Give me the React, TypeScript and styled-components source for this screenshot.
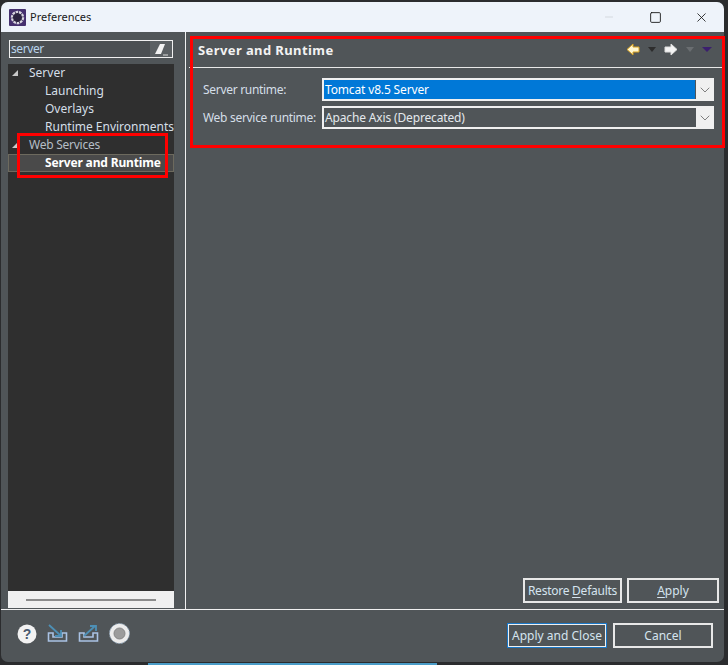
import React from "react";
import styled, { createGlobalStyle } from "styled-components";
import { Minus, Square, X, ChevronDown } from "lucide-react";

const GlobalStyle = createGlobalStyle`
  html, body {
    margin: 0;
    padding: 0;
    background: #2b2c2e;
    overflow: hidden;
  }
  * {
    box-sizing: border-box;
  }
`;

const Desktop = styled.div`
  position: relative;
  width: 728px;
  height: 665px;
  padding: 2px 4px 3px 1px;
  font-family: "Noto Sans", "Liberation Sans", sans-serif;
  font-size: 12px;
  color: #e6ebef;
  overflow: hidden;
`;

const BackdropLine = styled.div`
  position: absolute;
  left: 148px;
  top: 663px;
  width: 289px;
  height: 2px;
  background: #4a9cc7;
`;

const Window = styled.div`
  position: relative;
  height: 660px;
  display: flex;
  flex-direction: column;
  background: #505558;
  border-radius: 7px;
`;

const TitleBar = styled.div`
  height: 30px;
  flex: none;
  display: flex;
  align-items: center;
  background: #eef3fa;
  border-radius: 7px 7px 0 0;
  color: #1a1a1a;
  padding-left: 8px;
`;

const AppIcon = styled.svg`
  width: 17px;
  height: 17px;
  margin-right: 4px;
`;

const TitleText = styled.span`
  flex: 1;
  font-size: 11px;
  padding-bottom: 2px;
`;

const WinButton = styled.div<{ $dim?: boolean }>`
  width: 46px;
  height: 30px;
  display: flex;
  align-items: center;
  justify-content: center;
  color: ${(p) => (p.$dim ? "#b9bdc2" : "#111")};
`;

const Body = styled.div`
  flex: 1;
  min-height: 0;
  display: flex;
  border-bottom: 1px solid #f0f0f0;
`;

const Sidebar = styled.div`
  width: 185px;
  flex: none;
  display: flex;
  flex-direction: column;
  padding: 8px 11px 1px 7px;
  border-right: 1px solid #f0f0f0;
`;

const Search = styled.div`
  height: 18px;
  flex: none;
  display: flex;
  align-items: center;
  justify-content: space-between;
  margin: 0 1px;
  padding: 0 0 1px 1px;
  background: #4b4f52;
  border: 1px solid #f0f0f0;
  color: #b9d4ec;
  letter-spacing: -0.4px;
`;

const ClearBox = styled.div`
  width: 22px;
  height: 16px;
  margin-bottom: -1px;
  display: flex;
  align-items: center;
  justify-content: center;
  background: #5b6063;
`;

const Tree = styled.div`
  flex: 1;
  margin-top: 6px;
  background: #2f2f2f;
`;

const TreeRow = styled.div<{ $level: number; $selected?: boolean; $muted?: boolean }>`
  height: 18px;
  display: flex;
  align-items: center;
  white-space: nowrap;
  padding-left: ${(p) => (p.$level === 0 ? 4 : 37)}px;
  padding-bottom: 2px;
  font-weight: ${(p) => (p.$selected ? 700 : 400)};
  letter-spacing: ${(p) => (p.$selected ? "-0.15px" : p.$muted ? "-0.25px" : "0")};
  color: ${(p) => (p.$selected ? "#ffffff" : p.$muted ? "#b5bec6" : "#d5dfe8")};
  background: ${(p) => (p.$selected ? "#4a4a4a" : "transparent")};
  box-shadow: ${(p) => (p.$selected ? "inset 0 0 0 1px #6d6a5e" : "none")};
`;

const Twisty = styled.span`
  width: 0;
  height: 0;
  margin-right: 11px;
  margin-top: 1px;
  border-style: solid;
  border-width: 0 0 6px 6px;
  border-color: transparent transparent #c8c8c8 transparent;
`;

const ScrollFooter = styled.div`
  height: 17px;
  flex: none;
  display: flex;
  align-items: center;
  justify-content: center;
  background: #f0f0f0;
`;

const ScrollThumb = styled.div`
  width: 130px;
  height: 2px;
  background: #8b8b8b;
`;

const Content = styled.div`
  flex: 1;
  min-width: 0;
  display: flex;
  flex-direction: column;
  padding-left: 3px;
`;

const PageHeader = styled.div`
  height: 36px;
  flex: none;
  display: flex;
  align-items: center;
  justify-content: space-between;
  padding: 0 12px 0 9px;
  border-bottom: 1px solid #e8e8e8;
`;

const PageTitle = styled.h1`
  margin: 0;
  font-size: 13px;
  font-weight: 700;
  letter-spacing: 0.4px;
  color: #f2f2f2;
`;

const NavIcons = styled.div`
  display: flex;
  align-items: center;
  gap: 8px;
`;

const Form = styled.div`
  padding: 10px 10px 0 14px;
  display: grid;
  grid-template-columns: 119px 1fr;
  row-gap: 5px;
  align-items: center;
`;

const FieldLabel = styled.label`
  color: #d5dfe8;
  white-space: nowrap;
  letter-spacing: -0.3px;
`;

const Select = styled.div`
  height: 23px;
  display: flex;
  background: #f0f0f0;
  padding: 2px 0 2px 2px;
`;

const SelectValue = styled.div<{ $active?: boolean }>`
  flex: 1;
  display: flex;
  align-items: center;
  padding-left: 1px;
  letter-spacing: -0.15px;
  color: ${(p) => (p.$active ? "#ffffff" : "#e3e8ec")};
  background: ${(p) => (p.$active ? "#0078d7" : "#505558")};
  border-right: ${(p) => (p.$active ? "1px solid #505558" : "none")};
`;

const SelectArrow = styled.div`
  width: 18px;
  display: flex;
  align-items: center;
  justify-content: center;
  color: #555;
`;

const Spacer = styled.div`
  flex: 1;
`;

const PageActions = styled.div`
  display: flex;
  justify-content: flex-end;
  gap: 5px;
  padding: 0 5px 6px 0;
`;

const Button = styled.button<{ $width: number; $focused?: boolean }>`
  width: ${(p) => p.$width}px;
  height: 25px;
  padding: 0;
  font: inherit;
  letter-spacing: ${(p) => (p.$width === 99 ? "-0.25px" : "0")};
  color: #d5e4ef;
  background: #505558;
  border: 2px solid ${(p) => (p.$focused ? "#f0f0f0" : "#e8e8e8")};
  outline: ${(p) => (p.$focused ? "1px solid #1a78c8" : "none")};
  outline-offset: -1px;
  u {
    text-underline-offset: 2px;
  }
`;

const Footer = styled.div`
  height: 52px;
  flex: none;
  display: flex;
  align-items: flex-start;
  justify-content: space-between;
  border-radius: 0 0 7px 7px;
  padding: 13px 11px 0 16px;
`;

const FooterIcons = styled.div`
  display: flex;
  align-items: center;
  gap: 10px;
`;

const FooterButtons = styled.div`
  display: flex;
  gap: 6px;
`;

const Highlight = styled.div<{ $x: number; $y: number; $w: number; $h: number }>`
  position: absolute;
  left: ${(p) => p.$x}px;
  top: ${(p) => p.$y}px;
  width: ${(p) => p.$w}px;
  height: ${(p) => p.$h}px;
  border: 3px solid #ff0000;
  pointer-events: none;
`;

function NavArrow({ dir, color, edge }: { dir: "left" | "right"; color: string; edge: string }) {
  const d =
    dir === "left"
      ? "M1 6.5 L7 1 V4 H13 V9 H7 V12 Z"
      : "M13 6.5 L7 1 V4 H1 V9 H7 V12 Z";
  return (
    <svg width="14" height="13" viewBox="0 0 14 13">
      <path d={d} fill={color} stroke={edge} strokeWidth="1" />
    </svg>
  );
}

function Caret({ color, wide }: { color: string; wide?: boolean }) {
  return (
    <svg width={wide ? 10 : 8} height="5" viewBox="0 0 8 5" preserveAspectRatio="none">
      <path d="M0 0 H8 L4 5 Z" fill={color} />
    </svg>
  );
}

function ImportIcon({ out }: { out?: boolean }) {
  return (
    <svg width="21" height="19" viewBox="0 0 21 19" fill="none">
      <path d="M1.5 9 V17 H19.5 V9 H15 V13 H6 V9 Z" fill="#505558" stroke="#a9c2e4" strokeWidth="1.6" />
      <path
        d={out ? "M6 12 L17 2 M12 2 H18 V7" : "M2 1 L13 11 M8 12 H14 V6"}
        stroke="#4d8fb5"
        strokeWidth="1.8"
      />
    </svg>
  );
}

export default function App() {
  return (
    <Desktop>
      <GlobalStyle />
      <BackdropLine />
      <Window>
        <TitleBar>
          <AppIcon viewBox="0 0 17 17">
            <rect width="17" height="17" rx="1" fill="#45306e" />
            <circle cx="8.5" cy="8.5" r="5.6" fill="#2c2440" stroke="#d8d6df" strokeWidth="2.2" strokeDasharray="2.6 0.8" />
          </AppIcon>
          <TitleText>Preferences</TitleText>
          <WinButton $dim>
            <Minus size={12} strokeWidth={1} />
          </WinButton>
          <WinButton>
            <Square size={13} strokeWidth={1.6} />
          </WinButton>
          <WinButton>
            <X size={15} strokeWidth={1.3} />
          </WinButton>
        </TitleBar>
        <Body>
          <Sidebar>
            <Search>
              server
              <ClearBox>
                <svg width="14" height="13" viewBox="0 0 14 13">
                  <path d="M1 11 L6 1 H11 L7 11 Z" fill="#f2f2f2" />
                  <path d="M9 12 H14" stroke="#dddddd" />
                </svg>
              </ClearBox>
            </Search>
            <Tree>
              <TreeRow $level={0}><Twisty />Server</TreeRow>
              <TreeRow $level={1}>Launching</TreeRow>
              <TreeRow $level={1}>Overlays</TreeRow>
              <TreeRow $level={1}>Runtime Environments</TreeRow>
              <TreeRow $level={0} $muted><Twisty />Web Services</TreeRow>
              <TreeRow $level={1} $selected>Server and Runtime</TreeRow>
            </Tree>
            <ScrollFooter>
              <ScrollThumb />
            </ScrollFooter>
          </Sidebar>
          <Content>
            <PageHeader>
              <PageTitle>Server and Runtime</PageTitle>
              <NavIcons>
                <NavArrow dir="left" color="#fff6d0" edge="#d9a21f" />
                <Caret color="#2d2d2d" />
                <NavArrow dir="right" color="#f4f4f4" edge="#dddddd" />
                <Caret color="#6a6e71" />
                <Caret color="#3b1f6e" wide />
              </NavIcons>
            </PageHeader>
            <Form>
              <FieldLabel>Server runtime:</FieldLabel>
              <Select>
                <SelectValue $active>Tomcat v8.5 Server</SelectValue>
                <SelectArrow><ChevronDown size={16} strokeWidth={1.1} /></SelectArrow>
              </Select>
              <FieldLabel>Web service runtime:</FieldLabel>
              <Select>
                <SelectValue>Apache Axis (Deprecated)</SelectValue>
                <SelectArrow><ChevronDown size={16} strokeWidth={1.1} /></SelectArrow>
              </Select>
            </Form>
            <Spacer />
            <PageActions>
              <Button $width={99}>Restore <u>D</u>efaults</Button>
              <Button $width={92}><u>A</u>pply</Button>
            </PageActions>
          </Content>
        </Body>
        <Footer>
          <FooterIcons>
            <svg width="20" height="20" viewBox="0 0 20 20">
              <circle cx="10" cy="10" r="9.5" fill="#f2f2f2" />
              <text x="10" y="15" textAnchor="middle" fontSize="14" fontWeight="700" fontFamily="Liberation Sans" fill="#4a5a70">?</text>
            </svg>
            <ImportIcon />
            <ImportIcon out />
            <svg width="21" height="21" viewBox="0 0 21 21">
              <circle cx="10.5" cy="10.5" r="10" fill="#ececec" stroke="#8ea2b5" strokeDasharray="2 1" />
              <circle cx="10.5" cy="10.5" r="5.5" fill="#9c9c9c" stroke="#858585" />
            </svg>
          </FooterIcons>
          <FooterButtons>
            <Button $width={100} $focused>Apply and Close</Button>
            <Button $width={100}>Cancel</Button>
          </FooterButtons>
        </Footer>
        <Highlight $x={16} $y={131} $w={151} $h={45} />
        <Highlight $x={189} $y={34} $w={535} $h={112} />
      </Window>
    </Desktop>
  );
}
